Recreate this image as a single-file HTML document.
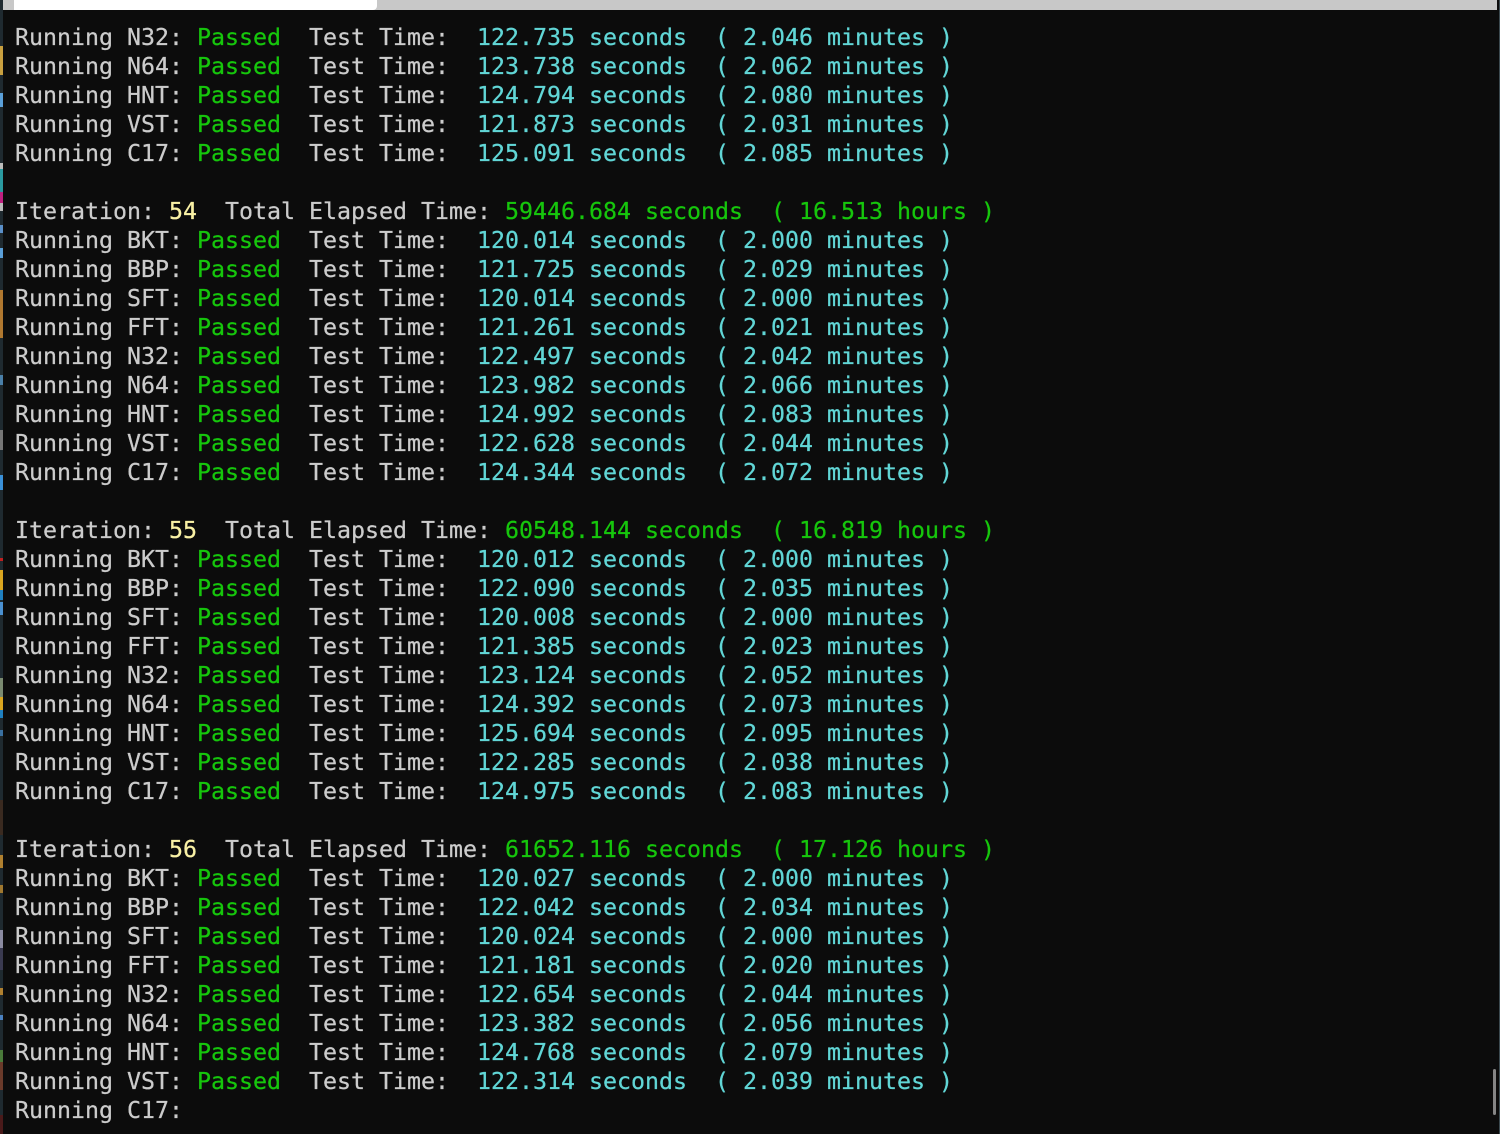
<!DOCTYPE html>
<html>
<head>
<meta charset="utf-8">
<style>
html,body{margin:0;padding:0;background:#0c0c0c;}
body{position:relative;width:1500px;height:1134px;overflow:hidden;}
pre{position:absolute;left:15px;top:23px;margin:0;font-family:"DejaVu Sans Mono","Liberation Mono",monospace;font-size:23.25px;line-height:29px;letter-spacing:.002px;color:#cccccc;white-space:pre;-webkit-text-stroke:.25px currentColor;}
.g{color:#16c60c}.c{color:#61d6d6}.y{color:#f9f1a5}
.b{position:absolute}
.s{position:absolute;left:0;width:3px}
</style>
</head>
<body>
<div class="b" style="left:3px;top:0;width:1494px;height:10px;background:#c8c8c8"></div>
<div class="b" style="left:14px;top:0;width:363px;height:10px;background:#ffffff;border-radius:0 0 4px 0"></div>
<div class="b" style="left:3px;top:0;width:11px;height:10px;background:#c8c8c8;border-radius:0 0 0 5px"></div>
<div class="b" style="left:0;top:0;width:3px;height:1134px;background:#1f2a30"></div>
<div class="b" style="left:1497px;top:0;width:3px;height:1134px;background:#0c0c0c"></div>
<div class="b" style="left:1499px;top:0;width:1px;height:1134px;background:#3c4a50"></div>
<div class="b" style="left:1493px;top:1069px;width:3px;height:46px;background:#858585;border-radius:2px"></div>

<div class="s" style="top:46px;height:29px;background:#c9a040"></div>
<div class="s" style="top:93px;height:14px;background:#5a9fd8"></div>
<div class="s" style="top:163px;height:6px;background:#bbbbbb"></div>
<div class="s" style="top:169px;height:23px;background:#2a9aa0"></div>
<div class="s" style="top:192px;height:11px;background:#c02080"></div>
<div class="s" style="top:203px;height:8px;background:#bbbbbb"></div>
<div class="s" style="top:225px;height:8px;background:#5a8fc8"></div>
<div class="s" style="top:248px;height:10px;background:#5a9fd8"></div>
<div class="s" style="top:290px;height:48px;background:#b07830"></div>
<div class="s" style="top:375px;height:10px;background:#4a7fa8"></div>
<div class="s" style="top:430px;height:20px;background:#777777"></div>
<div class="s" style="top:475px;height:15px;background:#3a90d8"></div>
<div class="s" style="top:558px;height:3px;background:#c02020"></div>
<div class="s" style="top:570px;height:20px;background:#d9a520"></div>
<div class="s" style="top:590px;height:10px;background:#2080c0"></div>
<div class="s" style="top:602px;height:13px;background:#4a90d0"></div>
<div class="s" style="top:678px;height:19px;background:#7a8a70"></div>
<div class="s" style="top:697px;height:13px;background:#d9a520"></div>
<div class="s" style="top:710px;height:8px;background:#2080c0"></div>
<div class="s" style="top:730px;height:6px;background:#3a70a0"></div>
<div class="s" style="top:800px;height:35px;background:#3a2a20"></div>
<div class="s" style="top:855px;height:13px;background:#b08030"></div>
<div class="s" style="top:885px;height:8px;background:#a07830"></div>
<div class="s" style="top:930px;height:18px;background:#8a8aa0"></div>
<div class="s" style="top:948px;height:22px;background:#3a3a50"></div>
<div class="s" style="top:988px;height:7px;background:#b08030"></div>
<div class="s" style="top:1015px;height:5px;background:#4a80c0"></div>
<div class="s" style="top:1050px;height:12px;background:#4a7a3a"></div>
<div class="s" style="top:1062px;height:28px;background:#6a3a2a"></div>
<div class="s" style="top:1115px;height:19px;background:#4a1a1a"></div>

<pre>Running N32: <span class="g">Passed</span>  Test Time:  <span class="c">122.735 seconds  ( 2.046 minutes )</span>
Running N64: <span class="g">Passed</span>  Test Time:  <span class="c">123.738 seconds  ( 2.062 minutes )</span>
Running HNT: <span class="g">Passed</span>  Test Time:  <span class="c">124.794 seconds  ( 2.080 minutes )</span>
Running VST: <span class="g">Passed</span>  Test Time:  <span class="c">121.873 seconds  ( 2.031 minutes )</span>
Running C17: <span class="g">Passed</span>  Test Time:  <span class="c">125.091 seconds  ( 2.085 minutes )</span>

Iteration: <span class="y">54</span>  Total Elapsed Time: <span class="g">59446.684 seconds  ( 16.513 hours )</span>
Running BKT: <span class="g">Passed</span>  Test Time:  <span class="c">120.014 seconds  ( 2.000 minutes )</span>
Running BBP: <span class="g">Passed</span>  Test Time:  <span class="c">121.725 seconds  ( 2.029 minutes )</span>
Running SFT: <span class="g">Passed</span>  Test Time:  <span class="c">120.014 seconds  ( 2.000 minutes )</span>
Running FFT: <span class="g">Passed</span>  Test Time:  <span class="c">121.261 seconds  ( 2.021 minutes )</span>
Running N32: <span class="g">Passed</span>  Test Time:  <span class="c">122.497 seconds  ( 2.042 minutes )</span>
Running N64: <span class="g">Passed</span>  Test Time:  <span class="c">123.982 seconds  ( 2.066 minutes )</span>
Running HNT: <span class="g">Passed</span>  Test Time:  <span class="c">124.992 seconds  ( 2.083 minutes )</span>
Running VST: <span class="g">Passed</span>  Test Time:  <span class="c">122.628 seconds  ( 2.044 minutes )</span>
Running C17: <span class="g">Passed</span>  Test Time:  <span class="c">124.344 seconds  ( 2.072 minutes )</span>

Iteration: <span class="y">55</span>  Total Elapsed Time: <span class="g">60548.144 seconds  ( 16.819 hours )</span>
Running BKT: <span class="g">Passed</span>  Test Time:  <span class="c">120.012 seconds  ( 2.000 minutes )</span>
Running BBP: <span class="g">Passed</span>  Test Time:  <span class="c">122.090 seconds  ( 2.035 minutes )</span>
Running SFT: <span class="g">Passed</span>  Test Time:  <span class="c">120.008 seconds  ( 2.000 minutes )</span>
Running FFT: <span class="g">Passed</span>  Test Time:  <span class="c">121.385 seconds  ( 2.023 minutes )</span>
Running N32: <span class="g">Passed</span>  Test Time:  <span class="c">123.124 seconds  ( 2.052 minutes )</span>
Running N64: <span class="g">Passed</span>  Test Time:  <span class="c">124.392 seconds  ( 2.073 minutes )</span>
Running HNT: <span class="g">Passed</span>  Test Time:  <span class="c">125.694 seconds  ( 2.095 minutes )</span>
Running VST: <span class="g">Passed</span>  Test Time:  <span class="c">122.285 seconds  ( 2.038 minutes )</span>
Running C17: <span class="g">Passed</span>  Test Time:  <span class="c">124.975 seconds  ( 2.083 minutes )</span>

Iteration: <span class="y">56</span>  Total Elapsed Time: <span class="g">61652.116 seconds  ( 17.126 hours )</span>
Running BKT: <span class="g">Passed</span>  Test Time:  <span class="c">120.027 seconds  ( 2.000 minutes )</span>
Running BBP: <span class="g">Passed</span>  Test Time:  <span class="c">122.042 seconds  ( 2.034 minutes )</span>
Running SFT: <span class="g">Passed</span>  Test Time:  <span class="c">120.024 seconds  ( 2.000 minutes )</span>
Running FFT: <span class="g">Passed</span>  Test Time:  <span class="c">121.181 seconds  ( 2.020 minutes )</span>
Running N32: <span class="g">Passed</span>  Test Time:  <span class="c">122.654 seconds  ( 2.044 minutes )</span>
Running N64: <span class="g">Passed</span>  Test Time:  <span class="c">123.382 seconds  ( 2.056 minutes )</span>
Running HNT: <span class="g">Passed</span>  Test Time:  <span class="c">124.768 seconds  ( 2.079 minutes )</span>
Running VST: <span class="g">Passed</span>  Test Time:  <span class="c">122.314 seconds  ( 2.039 minutes )</span>
Running C17:</pre>
</body>
</html>
